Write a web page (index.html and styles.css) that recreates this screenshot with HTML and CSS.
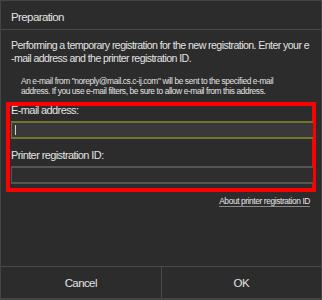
FILE: index.html
```html
<!DOCTYPE html>
<html>
<head>
<meta charset="utf-8">
<link rel="stylesheet" href="styles.css">
</head>
<body>
<div class="dialog">
  <div class="header">Preparation</div>
  <div class="content">
    <p class="lead">Performing a temporary registration for the new registration. Enter your e<br>-mail address and the printer registration ID.</p>
    <p class="note">An e-mail from "noreply@mail.cs.c-ij.com" will be sent to the specified e-mail<br>address. If you use e-mail filters, be sure to allow e-mail from this address.</p>
    <div class="fields">
      <div class="highlight"></div>
      <label class="label">E-mail address:</label>
      <div class="input focused"><span class="caret"></span></div>
      <label class="label second">Printer registration ID:</label>
      <div class="input"></div>
    </div>
    <div class="linkrow"><span class="link">About printer registration ID</span></div>
  </div>
  <div class="footer">
    <div class="btn">Cancel</div>
    <div class="btn">OK</div>
  </div>
</div>
</body>
</html>
```
FILE: styles.css
```css
html, body {
  margin: 0;
  padding: 0;
  background: #2b2b2b;
}
.dialog {
  width: 322px;
  height: 300px;
  box-sizing: border-box;
  border: 1px solid #444;
  border-bottom-width: 2px;
  background: #2c2c2c;
  display: flex;
  flex-direction: column;
  font-family: "Liberation Sans", Arial, sans-serif;
  color: #e2e2e2;
}
.header {
  height: 29px;
  box-sizing: border-box;
  border-bottom: 1px solid #4a4a4a;
  padding: 9px 0 0 10px;
  font-size: 11.5px;
  line-height: 14px;
  letter-spacing: -0.6px;
}
.content {
  flex: 1;
  padding: 0 0 0 10px;
}
.lead {
  margin: 9px 0 0 0;
  font-size: 10.6px;
  line-height: 13px;
  letter-spacing: -0.58px;
  white-space: nowrap;
}
.note {
  margin: 11px 0 0 10px;
  font-size: 8.4px;
  line-height: 10px;
  letter-spacing: -0.4px;
  white-space: nowrap;
}
.fields {
  position: relative;
  margin-top: 7px;
  margin-right: 8px;
  display: flex;
  flex-direction: column;
}
.highlight {
  position: absolute;
  left: -5px;
  top: -1px;
  right: -3px;
  bottom: -8px;
  border: 4px solid #ff0000;
  pointer-events: none;
}
.label {
  font-size: 11px;
  line-height: 14px;
  height: 14px;
  letter-spacing: -0.6px;
}
.label.second {
  margin-top: 9px;
}
.input {
  height: 18px;
  box-sizing: border-box;
  margin-top: 4px;
  border-top: 2px solid #555;
  border-bottom: 2px solid #555;
  border-left: 1px solid #555;
  background: #2e2e2e;
  position: relative;
}
.input.focused {
  border-color: #73722e;
  background: #393939;
}
.caret {
  position: absolute;
  left: 3px;
  top: 2px;
  width: 1px;
  height: 10px;
  background: #cfcfcf;
}
.linkrow {
  display: flex;
  justify-content: flex-end;
  padding-right: 11px;
  margin-top: 12px;
}
.link {
  font-size: 8.4px;
  line-height: 10px;
  letter-spacing: -0.4px;
  border-bottom: 1px solid #888;
  color: #e6e6e6;
}
.footer {
  height: 31px;
  border-top: 1px solid #4a4a4a;
  display: flex;
}
.btn {
  flex: 1;
  display: flex;
  align-items: center;
  justify-content: center;
  font-size: 11.5px;
  letter-spacing: -0.6px;
  color: #e2e2e2;
}
.btn + .btn {
  border-left: 1px solid #4a4a4a;
}
```
